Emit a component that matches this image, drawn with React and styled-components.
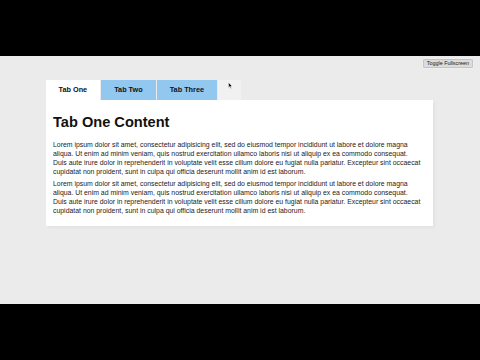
import React, { useState } from "react";
import styled, { createGlobalStyle } from "styled-components";

const GlobalStyle = createGlobalStyle`
  html, body {
    margin: 0;
    padding: 0;
    background: #000;
  }
  body {
    font-family: "Liberation Sans", Arial, sans-serif;
  }
`;

const Screen = styled.div`
  width: 480px;
  height: 360px;
  display: flex;
  flex-direction: column;
  background: #000;
  overflow: hidden;
`;

const Letterbox = styled.div`
  height: ${(p) => p.h}px;
  flex-shrink: 0;
  background: #000;
`;

const Stage = styled.div`
  position: relative;
  height: 248px;
  flex-shrink: 0;
  background: #ebebeb;
  padding: 3px 7px 0 46px;
  box-sizing: border-box;
  display: flex;
  flex-direction: column;
`;

const TopRow = styled.div`
  display: flex;
  justify-content: flex-end;
  height: 21px;
`;

const ToggleButton = styled.button`
  height: 9px;
  padding: 0 3px;
  font: 5.4px/7px "Liberation Sans", Arial, sans-serif;
  color: #222;
  background: #dcdcdc;
  border: 1px solid #c4c4c4;
  border-radius: 1px;
  box-shadow: 0 0 2px rgba(255, 255, 255, 0.8);
`;

const Tabs = styled.div`
  width: 387px;
`;

const TabList = styled.div`
  display: flex;
  height: 20px;
  gap: 1px;
`;

const Tab = styled.button`
  border: none;
  margin: 0;
  padding: 0 ${(p) => p.pad}px;
  height: 20px;
  font: bold 7.3px/20px "Liberation Sans", Arial, sans-serif;
  color: #111;
  background: ${(p) => (p.active ? "#ffffff" : "#92c7f0")};
  cursor: pointer;
`;

const TabFiller = styled.div`
  width: 23px;
  height: 20px;
  background: #f1f1f1;
`;

const Panel = styled.div`
  background: #fff;
  height: 126px;
  box-sizing: border-box;
  padding: 13px 8px 0 7px;
  box-shadow: 2px 2px 3px rgba(0, 0, 0, 0.04);
`;

const Heading = styled.h1`
  margin: 0 0 10px;
  font: bold 14.6px/18px "Liberation Sans", Arial, sans-serif;
  color: #111;
`;

const Para = styled.p`
  margin: 0 0 3.5px;
  font: 6.9px/8.9px "Liberation Sans", Arial, sans-serif;
  color: #222;
  white-space: nowrap;
`;

const Cursor = styled.svg`
  position: absolute;
  left: 228px;
  top: 26px;
`;

// the lines break where the reference breaks them
const loremLines = [
  "Lorem ipsum dolor sit amet, consectetur adipisicing elit, sed do eiusmod tempor incididunt ut labore et dolore magna",
  "aliqua. Ut enim ad minim veniam, quis nostrud exercitation ullamco laboris nisi ut aliquip ex ea commodo consequat.",
  "Duis aute irure dolor in reprehenderit in voluptate velit esse cillum dolore eu fugiat nulla pariatur. Excepteur sint occaecat",
  "cupidatat non proident, sunt in culpa qui officia deserunt mollit anim id est laborum.",
];

const tabs = [
  { id: "one", label: "Tab One", title: "Tab One Content", pad: 12.5 },
  { id: "two", label: "Tab Two", title: "Tab Two Content", pad: 13.5 },
  { id: "three", label: "Tab Three", title: "Tab Three Content", pad: 12.5 },
];

const Lorem = () => (
  <Para>
    {loremLines.map((line, i) => (
      <React.Fragment key={i}>
        {line}
        {i < loremLines.length - 1 && <br />}
      </React.Fragment>
    ))}
  </Para>
);

export default function App() {
  const [active, setActive] = useState("one");
  const current = tabs.find((t) => t.id === active);

  return (
    <>
      <GlobalStyle />
      <Screen>
        <Letterbox h={56} />
        <Stage>
          <TopRow>
            <ToggleButton>Toggle Fullscreen</ToggleButton>
          </TopRow>
          <Tabs>
            <TabList>
              {tabs.map((t) => (
                <Tab
                  key={t.id}
                  pad={t.pad}
                  active={active === t.id}
                  onClick={() => setActive(t.id)}
                >
                  {t.label}
                </Tab>
              ))}
              <TabFiller />
            </TabList>
            <Panel>
              <Heading>{current.title}</Heading>
              <Lorem />
              <Lorem />
            </Panel>
          </Tabs>
          <Cursor width="5" height="7" viewBox="0 0 5 7">
            <path d="M0.5 0.5 L0.5 5.8 L1.8 4.6 L2.7 6.5 L3.4 6.2 L2.6 4.3 L4.3 4.3 Z" fill="#111" stroke="#fff" strokeWidth="0.5" />
          </Cursor>
        </Stage>
        <Letterbox h={56} />
      </Screen>
    </>
  );
}
